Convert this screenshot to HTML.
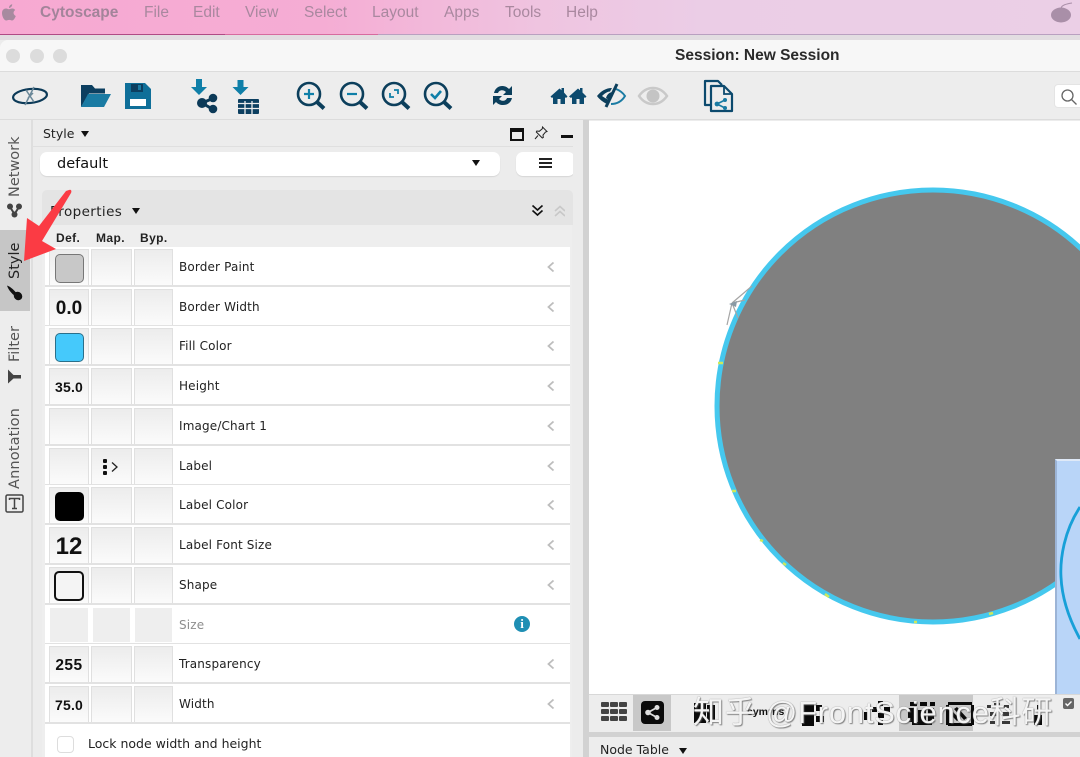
<!DOCTYPE html>
<html><head><meta charset="utf-8">
<style>
html,body{margin:0;padding:0;background:#ececec}
#p{position:relative;width:1080px;height:757px;overflow:hidden;font-family:"Liberation Sans","Noto Sans CJK SC",sans-serif;color:#1a1a1a;background:#ececec}
.a{position:absolute}
.t{position:absolute;white-space:nowrap;line-height:1}
.m{position:absolute;top:5px;font-size:15.500px;line-height:16px;color:#a9889f}
.row{position:absolute;left:45px;width:525px;height:38px;background:#fff;border-bottom:2px solid #e2e2e2}
.c{position:absolute;top:2px;height:36px;background:linear-gradient(#ececec,#fbfbfb);border:1px solid #e0e0e0;border-bottom:0;box-sizing:border-box;text-align:center;font-weight:bold;color:#111}
.c1{left:4px;width:40px}.c2{left:46px;width:41px}.c3{left:89px;width:39px}
.l{position:absolute;left:134px;top:12px;line-height:16px;letter-spacing:.15px;font-family:"DejaVu Sans","Liberation Sans",sans-serif;font-size:12px;color:#222}
.ch{position:absolute;left:502px;top:14px}
.sw{position:absolute;left:6px;top:4px;width:29px;height:29px;border-radius:5px;box-sizing:border-box}
.vt{position:absolute;white-space:nowrap;transform:rotate(-90deg);transform-origin:left top;font-size:14.500px;line-height:16px;color:#555;font-family:"DejaVu Sans","Liberation Sans",sans-serif}
</style></head><body><div id="p">

<!-- menu bar -->
<div class="a" style="left:0;top:0;width:1080px;height:34px;background:linear-gradient(90deg,#f7a9d2 0,#f5add4 30%,#efc4e0 50%,#ebcde6 65%,#ebcfe6 100%)"></div>
<div class="a" style="left:0;top:34px;width:1080px;height:1px;background:#b9a0c0"></div>
<div class="a" style="left:0;top:34px;width:225px;height:1px;background:#b04a85"></div>
<div class="a" style="left:225px;top:34px;width:153px;height:1px;background:#d76a9f"></div>
<div class="a" style="left:0;top:35px;width:1080px;height:5px;background:#e2dde1"></div>
<svg class="a" style="left:1px;top:2px" width="16" height="20" viewBox="0 0 16 20"><path d="M1 11c0-3 2-4.500 4-4.500 1.300 0 2 .7 3 .7s2-.9 3.500-.7c1 .1 2 .5 2.700 1.500-2.500 1.700-2 4.800.6 6-.7 2-2.200 4.500-3.800 4.500-1 0-1.500-.6-2.800-.6s-1.800.6-2.800.6C3 18.500 1 14.500 1 11zM8 6c0-2 1.500-3.500 3.200-3.700C11.300 4.300 9.800 6 8 6z" fill="#a78a9f"/></svg>
<div class="m" style="left:40px;font-weight:bold;color:#a3849a">Cytoscape</div>
<div class="m" style="left:144px">File</div>
<div class="m" style="left:193px">Edit</div>
<div class="m" style="left:245px">View</div>
<div class="m" style="left:304px">Select</div>
<div class="m" style="left:372px">Layout</div>
<div class="m" style="left:444px">Apps</div>
<div class="m" style="left:505px">Tools</div>
<div class="m" style="left:566px">Help</div>
<svg class="a" style="left:1048px;top:1px" width="26" height="22" viewBox="0 0 26 22"><ellipse cx="13" cy="14" rx="10" ry="7.500" fill="#a98fa8"/><path d="M13 7C14 4 18 3 24 2" stroke="#a98fa8" fill="none"/></svg>

<!-- title bar -->
<div class="a" style="left:0;top:40px;width:1080px;height:32px;background:#f7f7f7;border-radius:8px 0 0 0;border-bottom:1px solid #dcdcdc;box-sizing:border-box"></div>
<div class="a" style="left:6px;top:49px;width:14px;height:14px;border-radius:50%;background:#dcdcdc"></div>
<div class="a" style="left:30px;top:49px;width:14px;height:14px;border-radius:50%;background:#dcdcdc"></div>
<div class="a" style="left:53px;top:49px;width:14px;height:14px;border-radius:50%;background:#dcdcdc"></div>
<div class="t" style="left:675px;top:48px;font-size:15.500px;font-weight:bold;color:#2a2a2a">Session: New Session</div>

<!-- toolbar -->
<div class="a" style="left:0;top:72px;width:1080px;height:48px;background:#ededed;border-bottom:1px solid #dcdcdc;box-sizing:border-box"></div>
<svg class="a" style="left:0;top:72px" width="760" height="48" viewBox="0 72 760 48" fill="none">
<!-- logo -->
<ellipse cx="30" cy="96" rx="17" ry="7" stroke="#0c3a58" stroke-width="2.200" transform="rotate(-6 30 96)"/>
<path d="M25 105L34 87M26 90L34 102M28 98L33 93" stroke="#6b8899" stroke-width="1.500"/>
<!-- folder -->
<path d="M81 107V85h11l3 3.500h10v5H89z" fill="#0c3f60"/>
<path d="M81 107l7-13h23l-7 13z" fill="#1a7ba3"/>
<!-- save -->
<path d="M125 83h20l6 6v20h-26z" fill="#0f6f99"/>
<rect x="131" y="84" width="12" height="8" fill="#0c3f60"/><rect x="138" y="85" width="3" height="5" fill="#1a7ba3"/>
<rect x="130" y="99" width="16" height="7" fill="#fff"/>
<!-- import network -->
<path d="M196 79h6v8h5l-8 8-8-8h5z" fill="#0f7fa8"/>
<path d="M202 103l12-5M202 103l12 7" stroke="#0c3a58" stroke-width="3"/>
<circle cx="202" cy="103" r="5" fill="#0c3a58"/><circle cx="213" cy="98" r="4.300" fill="#0c3a58"/><circle cx="213" cy="109" r="4.300" fill="#0c3a58"/>
<!-- import table -->
<path d="M237.500 80h6v7h5l-8 8-8-8h5z" fill="#0f7fa8"/>
<rect x="238" y="99" width="21" height="15" rx="1" fill="#0c3f60"/>
<path d="M238 103.500h21M238 108.500h21M245 101v13M252 101v13" stroke="#ededed" stroke-width="1.300"/>
<!-- zooms -->
<g stroke="#0c3f5c" stroke-width="2.600"><circle cx="309" cy="94" r="11"/><path d="M317 102l7 6.500" stroke-width="4"/><circle cx="352" cy="94" r="11"/><path d="M360 102l7 6.500" stroke-width="4"/><circle cx="394" cy="94" r="11"/><path d="M402 102l7 6.500" stroke-width="4"/><circle cx="436" cy="94" r="11"/><path d="M444 102l7 6.500" stroke-width="4"/></g>
<path d="M304 94h10M309 89v10" stroke="#0f7fa8" stroke-width="2.200"/>
<path d="M347 94h10" stroke="#0f7fa8" stroke-width="2.200"/>
<path d="M390 93v4h4M394 90h4v4" stroke="#0f7fa8" stroke-width="1.800"/>
<path d="M431 94l4 4 6-7" stroke="#0f7fa8" stroke-width="2.600"/>
<!-- refresh -->
<path d="M494 93c1-5 5-7 8-7 3 0 5 1 7 3l3-3v9h-9l3-3c-3-3-7-2-8 1z" fill="#0c3f5c"/>
<path d="M512 98c-1 5-5 7-9 7-3 0-5-1-7-3l-3 3v-9h9l-3 3c3 3 7 2 8-1z" fill="#0c3f5c"/>
<!-- homes -->
<path d="M550.500 96.500l9-8 2 1.800V88h2.500v4.500l3.500 4-1.500 1.500-1-.8V104h-4.500v-5h-3v5h-4.500v-6.800l-1 .8z" fill="#0c4a6e"/>
<path d="M569 96.500l9-8 2 1.800V88h2.500v4.500l4 4-1.500 1.500-1-.8V104h-4.500v-5h-3v5H572v-6.800l-1 .8z" fill="#0c4a6e"/>
<!-- hidden eye -->
<path d="M612 88c-6 0-11 3-15 8 2 3 6 6 9 7.500l3-3.500c-2-1-5-2.500-7-4 3-3 6-4.500 8-4.500z" fill="#0c3f5c"/>
<path d="M616 89c4 1.500 7 4 9 7-3 5-8 8-14 8" stroke="#1a7ba3" stroke-width="2"/>
<path d="M606 98c1-4 4-6 7-6l-4 8z" fill="#0c3f5c"/>
<path d="M606 107l11-23" stroke="#0c3f5c" stroke-width="3"/>
<!-- eye -->
<path d="M639 96c3.500-5 8.500-8 14-8s10.500 3 14 8c-3.500 5-8.500 8-14 8s-10.500-3-14-8z" stroke="#c9c9c9" stroke-width="2.400"/>
<circle cx="653" cy="96" r="6.500" fill="#c4c4c4"/>
<!-- session doc -->
<path d="M711 105h-6V81h13l4 4" stroke="#0c4a6e" stroke-width="2.200" fill="#ededed" stroke-linejoin="round"/>
<path d="M711 86h13l8 8v17h-21z" stroke="#0c4a6e" stroke-width="2.200" fill="#ededed" stroke-linejoin="round"/>
<path d="M724 86v8h8" stroke="#0c4a6e" stroke-width="1.800"/>
<path d="M717 104l8-4M717 104l8 4" stroke="#1a7ba3" stroke-width="1.600"/><circle cx="717" cy="104" r="2.400" fill="#1a7ba3"/><circle cx="725" cy="100" r="2" fill="#1a7ba3"/><circle cx="725" cy="108" r="2" fill="#1a7ba3"/>
</svg>
<div class="a" style="left:1054px;top:84px;width:40px;height:24px;background:#fff;border-radius:4px;border:1px solid #e4e4e4;box-sizing:border-box"></div>
<svg class="a" style="left:1060px;top:88px" width="18" height="18" fill="none" stroke="#666" stroke-width="1.300"><circle cx="7.500" cy="7.500" r="5.500"/><path d="M11.500 11.500l5 5"/></svg>

<!-- left tab strip -->
<div class="a" style="left:0;top:120px;width:32px;height:637px;background:#ededed;border-right:1px solid #dedede;box-sizing:border-box"></div>
<div class="a" style="left:0;top:230px;width:30px;height:81px;background:#c6c6c6"></div>
<div class="vt" style="left:7px;top:197px">Network</div>
<svg class="a" style="left:6px;top:202px" width="17" height="17" fill="#444"><path d="M4 5L8.500 12L13 5" stroke="#444" stroke-width="2" fill="none"/><circle cx="4" cy="4.500" r="3"/><circle cx="13" cy="4.500" r="3"/><circle cx="8.500" cy="12.500" r="3"/></svg>
<div class="vt" style="left:7px;top:279px;color:#222">Style</div>
<svg class="a" style="left:4px;top:283px" width="20" height="19"><path d="M3 2.500C6 3.500 9 6 12 9.500L9.500 12C6.500 9 4 6 3 2.500z" fill="#111"/><ellipse cx="14" cy="13" rx="4.500" ry="4" transform="rotate(45 14 13)" fill="#111"/></svg>
<div class="vt" style="left:7px;top:362px">Filter</div>
<svg class="a" style="left:7px;top:369px" width="15" height="15" fill="#444"><path d="M1 0.500v14l5.500-5H14V6H6.500z"/></svg>
<div class="vt" style="left:7px;top:489px;letter-spacing:.15px">Annotation</div>
<svg class="a" style="left:5px;top:494px" width="19" height="19" fill="none" stroke="#444" stroke-width="1.500"><rect x="1" y="1" width="17" height="17" rx="1.500"/><path d="M4.500 6V4.500h10V6M9.500 4.500v10M7 14.500h5"/></svg>

<!-- style panel -->
<div class="a" style="left:32px;top:120px;width:1px;height:637px;background:#dedede"></div>
<div class="t" style="left:43px;top:128px;font-family:'DejaVu Sans',sans-serif;font-size:12.500px;color:#222">Style</div>
<div class="a" style="left:81px;top:131px;border-left:4px solid transparent;border-right:4px solid transparent;border-top:6px solid #111"></div>
<div class="a" style="left:510px;top:128px;width:10px;height:7px;border:2px solid #111;border-top-width:4px"></div>
<svg class="a" style="left:534px;top:126px" width="14" height="14" fill="none" stroke="#222" stroke-width="1"><path d="M8.500 1l4.500 4.500-1.500.5-2.500 3 .3 2.500-1 .5-6-6 .5-1 2.500.3 3-2.500z"/><path d="M4 9.500L1 13"/></svg>
<div class="a" style="left:561px;top:135px;width:12px;height:3px;background:#111"></div>
<div class="a" style="left:32px;top:146px;width:552px;height:1px;background:#dfdfdf"></div>

<div class="a" style="left:40px;top:152px;width:460px;height:24px;background:#fff;border-radius:7px;box-shadow:0 1px 1px #d6d6d6"></div>
<div class="t" style="left:57px;top:157px;font-size:14.500px;font-family:'DejaVu Sans',sans-serif;color:#111">default</div>
<div class="a" style="left:472px;top:160px;border-left:4px solid transparent;border-right:4px solid transparent;border-top:6px solid #111"></div>
<div class="a" style="left:516px;top:152px;width:59px;height:24px;background:#fff;border-radius:7px;box-shadow:0 1px 1px #d6d6d6"></div>
<div class="a" style="left:539px;top:158px;width:13px;height:2px;background:#222;box-shadow:0 4px 0 #222,0 8px 0 #222"></div>

<div class="a" style="left:42px;top:190px;width:531px;height:35px;background:#e4e4e4;border-radius:5px 5px 0 0"></div>
<div class="a" style="left:42px;top:225px;width:530px;height:532px;background:#eeeeee"></div>
<div class="t" style="left:50px;top:206px;font-size:13.500px;letter-spacing:.4px;font-family:'DejaVu Sans',sans-serif;color:#222">Properties</div>
<div class="a" style="left:132px;top:208px;border-left:4px solid transparent;border-right:4px solid transparent;border-top:6px solid #111"></div>
<svg class="a" style="left:531px;top:204px" width="34" height="14" fill="none" stroke-width="1.600"><path d="M1.500 1.500L6.500 6l5-4.500M1.500 6.500l5 4.500 5-4.500" stroke="#111"/><path d="M24 7l5-4.500L34 7M24 12l5-4.500L34 12" stroke="#c8c8c8"/></svg>
<div class="t" style="left:56px;top:232px;font-size:12px;font-weight:bold;letter-spacing:.4px;color:#222">Def.</div>
<div class="t" style="left:96px;top:232px;font-size:12px;font-weight:bold;letter-spacing:.4px;color:#222">Map.</div>
<div class="t" style="left:140px;top:232px;font-size:12px;font-weight:bold;letter-spacing:.4px;color:#222">Byp.</div>

<div class="row" style="top:247px"><div class="c c1"><div class="sw" style="left:5px;background:#c8c8c8;border:1px solid #777"></div></div><div class="c c2"></div><div class="c c3"></div><div class="l">Border Paint</div><svg class="ch" width="8" height="12" fill="none" stroke="#bdbdbd" stroke-width="1.800"><path d="M6.500 1.500L1.500 6l5 4.500"/></svg></div>
<div class="row" style="top:287px"><div class="c c1" style="font-size:19px;line-height:37px">0.0</div><div class="c c2"></div><div class="c c3"></div><div class="l">Border Width</div><svg class="ch" width="8" height="12" fill="none" stroke="#bdbdbd" stroke-width="1.800"><path d="M6.500 1.500L1.500 6l5 4.500"/></svg></div>
<div class="row" style="top:326px"><div class="c c1"><div class="sw" style="left:5px;background:#45c9fb;border:1px solid #2a6f8a"></div></div><div class="c c2"></div><div class="c c3"></div><div class="l">Fill Color</div><svg class="ch" width="8" height="12" fill="none" stroke="#bdbdbd" stroke-width="1.800"><path d="M6.500 1.500L1.500 6l5 4.500"/></svg></div>
<div class="row" style="top:366px"><div class="c c1" style="font-size:14px;line-height:36px;letter-spacing:.2px">35.0</div><div class="c c2"></div><div class="c c3"></div><div class="l">Height</div><svg class="ch" width="8" height="12" fill="none" stroke="#bdbdbd" stroke-width="1.800"><path d="M6.500 1.500L1.500 6l5 4.500"/></svg></div>
<div class="row" style="top:406px"><div class="c c1"></div><div class="c c2"></div><div class="c c3"></div><div class="l">Image/Chart 1</div><svg class="ch" width="8" height="12" fill="none" stroke="#bdbdbd" stroke-width="1.800"><path d="M6.500 1.500L1.500 6l5 4.500"/></svg></div>
<div class="row" style="top:446px"><div class="c c1"></div><div class="c c2"><div class="a" style="left:11px;top:10px;width:4px;height:4px;background:#111;border-radius:1px"></div><div class="a" style="left:11px;top:16px;width:4px;height:4px;background:#111;border-radius:1px"></div><div class="a" style="left:11px;top:22px;width:4px;height:4px;background:#111;border-radius:1px"></div><svg class="a" style="left:18px;top:12px" width="9" height="12"><path d="M2 1.500l5 4.500-5 4.500" fill="none" stroke="#222" stroke-width="1.300"/></svg></div><div class="c c3"></div><div class="l">Label</div><svg class="ch" width="8" height="12" fill="none" stroke="#bdbdbd" stroke-width="1.800"><path d="M6.500 1.500L1.500 6l5 4.500"/></svg></div>
<div class="row" style="top:485px"><div class="c c1"><div class="sw" style="left:5px;background:#000"></div></div><div class="c c2"></div><div class="c c3"></div><div class="l">Label Color</div><svg class="ch" width="8" height="12" fill="none" stroke="#bdbdbd" stroke-width="1.800"><path d="M6.500 1.500L1.500 6l5 4.500"/></svg></div>
<div class="row" style="top:525px"><div class="c c1" style="font-size:24px;line-height:37px">12</div><div class="c c2"></div><div class="c c3"></div><div class="l">Label Font Size</div><svg class="ch" width="8" height="12" fill="none" stroke="#bdbdbd" stroke-width="1.800"><path d="M6.500 1.500L1.500 6l5 4.500"/></svg></div>
<div class="row" style="top:565px"><div class="c c1"><div class="sw" style="left:4px;top:3px;width:30px;height:30px;background:#f4f4f4;border:2px solid #111"></div></div><div class="c c2"></div><div class="c c3"></div><div class="l">Shape</div><svg class="ch" width="8" height="12" fill="none" stroke="#bdbdbd" stroke-width="1.800"><path d="M6.500 1.500L1.500 6l5 4.500"/></svg></div>
<div class="row" style="top:605px"><div class="c c1" style="background:#eee;border:0;top:3px;height:34px;left:5px;width:38px"></div><div class="c c2" style="background:#eee;border:0;top:3px;height:34px;left:48px;width:37px"></div><div class="c c3" style="background:#eee;border:0;top:3px;height:34px;left:90px;width:37px"></div><div class="l" style="color:#8e8e8e">Size</div><div class="a" style="left:469px;top:11px;width:16px;height:16px;border-radius:50%;background:#1f8fb4;color:#fff;font:bold 13px/16px 'Liberation Serif',serif;text-align:center">i</div></div>
<div class="row" style="top:644px"><div class="c c1" style="font-size:15.500px;line-height:37px;letter-spacing:.5px">255</div><div class="c c2"></div><div class="c c3"></div><div class="l">Transparency</div><svg class="ch" width="8" height="12" fill="none" stroke="#bdbdbd" stroke-width="1.800"><path d="M6.500 1.500L1.500 6l5 4.500"/></svg></div>
<div class="row" style="top:684px"><div class="c c1" style="font-size:14px;line-height:37px;letter-spacing:.2px">75.0</div><div class="c c2"></div><div class="c c3"></div><div class="l">Width</div><svg class="ch" width="8" height="12" fill="none" stroke="#bdbdbd" stroke-width="1.800"><path d="M6.500 1.500L1.500 6l5 4.500"/></svg></div>
<div class="a" style="left:45px;top:724px;width:525px;height:33px;background:#fff"></div>
<div class="a" style="left:57px;top:736px;width:17px;height:17px;background:#fff;border:1px solid #ddd;border-radius:4px;box-sizing:border-box"></div>
<div class="t" style="left:88px;top:738px;font-size:12.500px;letter-spacing:0;font-family:'DejaVu Sans',sans-serif;color:#222">Lock node width and height</div>

<!-- splitter -->
<div class="a" style="left:573px;top:120px;width:10px;height:637px;background:#ececec"></div>
<div class="a" style="left:583px;top:120px;width:6px;height:637px;background:#d2d2d2"></div>

<!-- network canvas -->
<div class="a" style="left:589px;top:121px;width:491px;height:573px;background:#fff;overflow:hidden">
<svg class="a" style="left:0;top:0" width="491" height="573" viewBox="589 121 491 573">
<circle cx="933" cy="406" r="216" fill="#808080" stroke="#45c8ee" stroke-width="5"/>
<path d="M732 303L752 286M732 303L727 325M732 303L745 300M732 303L738 318" stroke="#a5a5a5" stroke-width="1.200" fill="none"/>
<path d="M729 304l8-3-1 6z" fill="#8a9aa5"/>
<g stroke="#cfe85a" stroke-width="2.500"><path d="M718 363h5M732 491h4M760 540l3 1M783 563l3 2M825 594l4 3M914 622l3 0M989 614l4-1"/></g>
</svg>
<div class="a" style="left:466px;top:338px;width:25px;height:235px;background:#b9d5f8;border-left:2px solid #9cb4d6;border-top:2px solid #dfe9f7;box-sizing:border-box"></div>
<svg class="a" style="left:466px;top:338px" width="25" height="235" fill="none"><path d="M25 48C9 72 5 100 6 118 7 140 14 160 25 180" stroke="#17a0d8" stroke-width="2.800"/></svg>
</div>

<!-- bottom thumbnails bar -->
<div class="a" style="left:589px;top:694px;width:491px;height:38px;background:#ededed;border-top:1px solid #d8d8d8;box-sizing:border-box"></div>
<div class="a" style="left:633px;top:695px;width:38px;height:36px;background:#c8c8c8"></div>
<div class="a" style="left:899px;top:695px;width:37px;height:36px;background:#c8c8c8"></div>
<div class="a" style="left:936px;top:695px;width:37px;height:36px;background:#c8c8c8"></div>
<svg class="a" style="left:600px;top:701px" width="28" height="22" fill="#444"><rect x="1" y="1" width="8" height="5" rx="1"/><rect x="10" y="1" width="8" height="5" rx="1"/><rect x="19" y="1" width="8" height="5" rx="1"/><rect x="1" y="8" width="8" height="5" rx="1"/><rect x="10" y="8" width="8" height="5" rx="1"/><rect x="19" y="8" width="8" height="5" rx="1"/><rect x="1" y="15" width="8" height="5" rx="1"/><rect x="10" y="15" width="8" height="5" rx="1"/><rect x="19" y="15" width="8" height="5" rx="1"/></svg>
<svg class="a" style="left:641px;top:701px" width="23" height="23"><rect width="23" height="23" rx="4" fill="#0a0a0a"/><path d="M7 11.500l9-5M7 11.500l9 5" stroke="#ddd" stroke-width="1.800"/><circle cx="7" cy="11.500" r="2.800" fill="#ddd"/><circle cx="16" cy="6.500" r="2.500" fill="#ddd"/><circle cx="16" cy="16.500" r="2.500" fill="#ddd"/></svg>
<!-- garbled thumbnails -->
<svg class="a" style="left:692px;top:700px" width="360" height="28">
<g fill="#0a0a0a">
<path d="M2 3h12v20H2zM15 5h8v17h-8z"/>
<rect x="110" y="2" width="12" height="24"/><rect x="124" y="5" width="6" height="6"/><rect x="124" y="16" width="8" height="6"/>
<path d="M180 7h5v5h-5zM186 1h5v5h-5zM186 13h6v5h-6zM192 7h6v5h-6zM186 20h5v5h-5zM172 12h4v8h-4z"/>
<path d="M218 2h7v4h-7zM228 2h7v4h-7zM238 2h5v4h-5zM216 8h6v14h-6zM226 10h8v12h-8zM236 8h6v14h-6zM220 22h20v3h-20z"/>
<path d="M256 2h24v3h-24zM254 5h3v20h-3zM279 5h3v20h-3zM256 23h24v3h-24zM262 9l10 11 3-2-10-11zM258 14l7 7 3-2-7-7z"/>
<path d="M295 5h4v3h-4zM302 3h6v3h-6zM312 5h5v3h-5zM298 12h8v4h-8zM311 12h6v4h-6zM298 21h5v3h-5zM310 21h8v3h-8z" opacity=".8"/>
<path d="M342 15h8v10h-8zM345 5h3v7h-3z"/>
</g></svg>
<div class="t" style="left:747px;top:707px;font-size:10.500px;font-weight:bold;color:#111">symrns</div>
<!-- watermark -->
<div class="t" style="left:693px;top:696px;font-size:31px;line-height:34px;color:rgba(255,255,255,.92);text-shadow:0 0 1px #777,1px 1px 1px rgba(90,90,90,.7);letter-spacing:.75px">知乎 @FrontScience科研</div>
<div class="a" style="left:1063px;top:698px;width:11px;height:11px;border-radius:2px;background:#666"></div>
<svg class="a" style="left:1063px;top:698px" width="11" height="11" fill="none" stroke="#fff" stroke-width="1.400"><path d="M2.500 5.500l2 2 4-4"/></svg>

<!-- node table panel -->
<div class="a" style="left:589px;top:732px;width:491px;height:5px;background:#d2d2d2"></div>
<div class="a" style="left:589px;top:737px;width:491px;height:20px;background:#ededed"></div>
<div class="t" style="left:600px;top:744px;font-size:12.500px;font-family:'DejaVu Sans',sans-serif;color:#222">Node Table</div>
<div class="a" style="left:679px;top:748px;border-left:4px solid transparent;border-right:4px solid transparent;border-top:6px solid #111"></div>

<!-- red arrow -->
<svg class="a" style="left:0;top:0;pointer-events:none" width="100" height="280"><path d="M69 190c2-1 3 1 2 3L42 241l14 8-32 12 3-43 12 8 27-35z" fill="#fb3b44"/></svg>

</div></body></html>
